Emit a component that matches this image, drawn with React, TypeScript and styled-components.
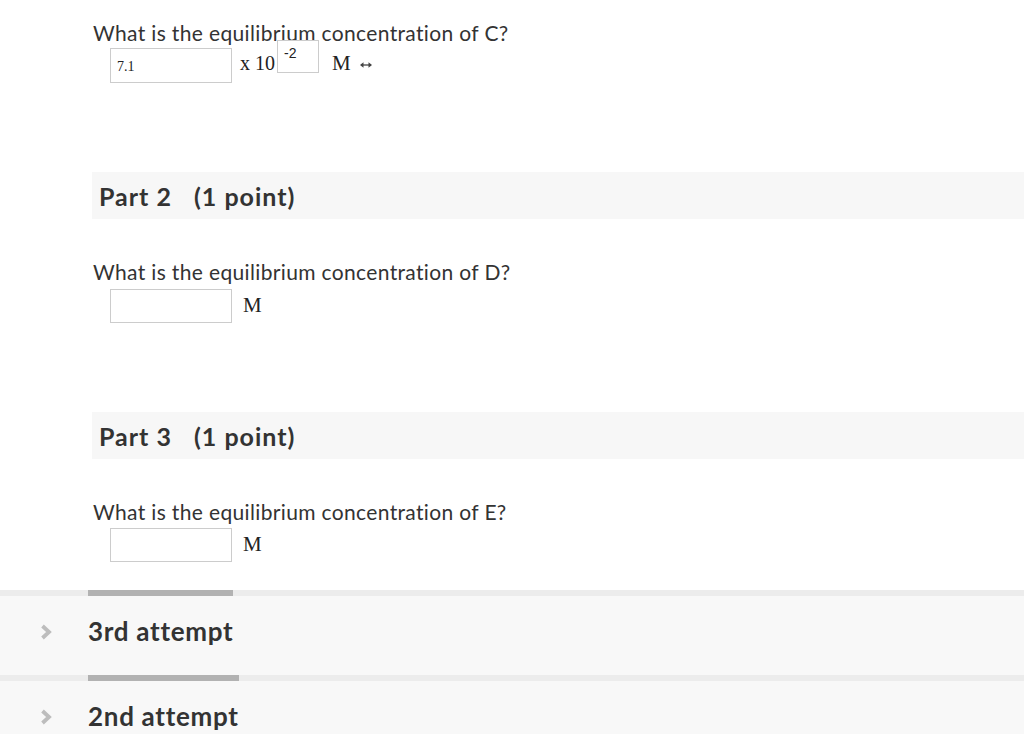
import styled, { createGlobalStyle } from 'styled-components';

const GlobalStyle = createGlobalStyle`
  html, body {
    margin: 0;
    padding: 0;
    background: #fff;
  }
  body {
    font-family: Lato, "Open Sans", sans-serif;
    color: #333;
  }
`;

const Page = styled.div`
  width: 1024px;
  height: 734px;
  overflow: hidden;
`;

const Parts = styled.div`
  padding: 21px 0 0 92px;
`;

const Question = styled.div`
  font-size: 21px;
  line-height: 24px;
  letter-spacing: 0.35px;
  padding-left: 1px;
  color: #333;
`;

const AnswerRow = styled.div<{ $top: number }>`
  display: flex;
  align-items: flex-start;
  margin: ${(p) => p.$top}px 0 0 18px;
  font-family: "Liberation Serif", "Times New Roman", serif;
  font-size: 20px;
  color: #222;
`;

const Input = styled.div<{ $offset?: number; $h?: number }>`
  box-sizing: border-box;
  width: 122px;
  height: ${(p) => p.$h ?? 34}px;
  margin-top: ${(p) => p.$offset ?? 0}px;
  border: 1px solid #ccc;
  background: #fff;
  font-family: "Liberation Serif", serif;
  font-size: 14px;
  line-height: 14px;
  padding: 11px 6px 0;
  color: #222;
`;

const Times = styled.span`
  margin: 11px 0 0 8px;
  line-height: 24px;
`;

const SupBox = styled.div`
  box-sizing: border-box;
  width: 42px;
  height: 33px;
  margin-left: 2px;
  border: 1px solid #ccc;
  font-family: "Liberation Sans", Arial, sans-serif;
  font-size: 14px;
  line-height: 16px;
  padding: 4px 0 0 6px;
  color: #222;
`;

const Unit = styled.span<{ $top: number; $left: number }>`
  margin: ${(p) => p.$top}px 0 0 ${(p) => p.$left}px;
  font-size: 21px;
  line-height: 24px;
`;

const Arrow = styled.svg`
  width: 12px;
  height: 8px;
  margin: 21px 0 0 9px;
`;

const PartHeader = styled.div<{ $top: number }>`
  display: flex;
  align-items: center;
  height: 47px;
  margin-top: ${(p) => p.$top}px;
  padding-left: 7px;
  background: #f7f7f7;
  font-size: 25px;
  letter-spacing: 1px;
  font-weight: 700;
  color: #333;
`;

const Points = styled.span`
  margin-left: 22px;
`;

const QBlock = styled.div`
  margin-top: 41px;
`;

const Attempts = styled.div`
  margin-top: 28px;
`;

const Attempt = styled.div`
  border-top: 6px solid #ececec;
  background: #f8f8f8;
`;

const AttemptHead = styled.div`
  display: flex;
  align-items: flex-start;
  height: 79px;
`;

const Chevron = styled.svg`
  width: 13px;
  height: 16px;
  margin: 28px 0 0 40px;
`;

const AttemptTitle = styled.div`
  margin: -6px 0 0 35px;
  padding-top: 20px;
  border-top: 6px solid #b2b2b2;
  font-size: 26px;
  letter-spacing: 0.7px;
  line-height: 30px;
  font-weight: 700;
  color: #333;
`;

const ChevronIcon = () => (
  <Chevron viewBox="0 0 13 16">
    <polyline points="2.5,2 9,8 2.5,14" fill="none" stroke="#bdbdbd" strokeWidth="3.8" />
  </Chevron>
);

const SwapArrow = () => (
  <Arrow viewBox="0 0 12 8">
    <line x1="1" y1="4" x2="11" y2="4" stroke="#444" strokeWidth="1.3" />
    <polygon points="0,4 3.5,1.2 3.5,6.8" fill="#444" />
    <polygon points="12,4 8.5,1.2 8.5,6.8" fill="#444" />
  </Arrow>
);

export default function App() {
  return (
    <Page>
      <GlobalStyle />
      <Parts>
        <Question>What is the equilibrium concentration of C?</Question>
        <AnswerRow $top={-5}>
          <Input $offset={8} $h={35}>7.1</Input>
          <Times>x 10</Times>
          <SupBox>-2</SupBox>
          <Unit $top={11} $left={13}>M</Unit>
          <SwapArrow />
        </AnswerRow>

        <PartHeader $top={89}>
          Part 2<Points>(1 point)</Points>
        </PartHeader>
        <QBlock>
          <Question>What is the equilibrium concentration of D?</Question>
          <AnswerRow $top={5}>
            <Input />
            <Unit $top={4} $left={11}>M</Unit>
          </AnswerRow>
        </QBlock>

        <PartHeader $top={89}>
          Part 3<Points>(1 point)</Points>
        </PartHeader>
        <QBlock>
          <Question>What is the equilibrium concentration of E?</Question>
          <AnswerRow $top={4}>
            <Input />
            <Unit $top={4} $left={11}>M</Unit>
          </AnswerRow>
        </QBlock>
      </Parts>

      <Attempts>
        <Attempt>
          <AttemptHead>
            <ChevronIcon />
            <AttemptTitle>3rd attempt</AttemptTitle>
          </AttemptHead>
        </Attempt>
        <Attempt>
          <AttemptHead>
            <ChevronIcon />
            <AttemptTitle>2nd attempt</AttemptTitle>
          </AttemptHead>
        </Attempt>
      </Attempts>
    </Page>
  );
}
